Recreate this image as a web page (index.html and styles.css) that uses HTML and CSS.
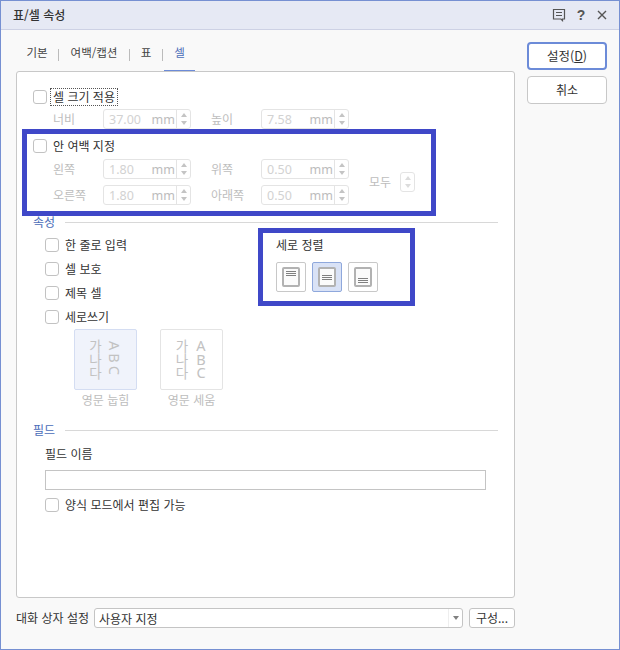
FILE: index.html
```html
<!DOCTYPE html>
<html lang="ko">
<head>
<meta charset="utf-8">
<title>표/셀 속성</title>
<link rel="stylesheet" href="styles.css">
</head>
<body>
<div class="window">
  <header class="titlebar">
    <span class="title">표/셀 속성</span>
    <div class="title-icons">
      <svg class="ti" width="14" height="14" viewBox="0 0 14 14"><path d="M1.5 1.5h11v9.5h-2v1.6l-1.6-1.6h-7.4z" fill="none" stroke="#555" stroke-width="1.2"/><path d="M4 4.5h6M4 7.5h6" stroke="#555" stroke-width="1.2"/></svg>
      <span class="help">?</span>
      <svg class="ti" width="12" height="12" viewBox="0 0 12 12"><path d="M2 2l8 8M10 2l-8 8" stroke="#555" stroke-width="1.4"/></svg>
    </div>
  </header>
  <div class="content">
    <div class="main">
      <nav class="tabs">
        <span class="tab t1">기본</span><i class="sep"></i>
        <span class="tab t2">여백/캡션</span><i class="sep"></i>
        <span class="tab t3">표</span><i class="sep"></i>
        <span class="tab t4 active">셀</span>
      </nav>
      <section class="panel">
        <div class="check-row first"><span class="box"></span><span class="label focus">셀 크기 적용</span></div>
        <div class="field-row size-row">
          <span class="flabel">너비</span>
          <div class="spin"><span class="val">37.00</span><span class="unit">mm</span><span class="arrows"><b class="up"></b><b class="down"></b></span></div>
          <span class="flabel second">높이</span>
          <div class="spin"><span class="val">7.58</span><span class="unit">mm</span><span class="arrows"><b class="up"></b><b class="down"></b></span></div>
        </div>
        <div class="check-row margin-check"><span class="box"></span><span class="label">안 여백 지정</span></div>
        <div class="margins">
          <div class="margin-rows">
            <div class="field-row">
              <span class="flabel">왼쪽</span>
              <div class="spin"><span class="val">1.80</span><span class="unit">mm</span><span class="arrows"><b class="up"></b><b class="down"></b></span></div>
              <span class="flabel second">위쪽</span>
              <div class="spin"><span class="val">0.50</span><span class="unit">mm</span><span class="arrows"><b class="up"></b><b class="down"></b></span></div>
            </div>
            <div class="field-row">
              <span class="flabel">오른쪽</span>
              <div class="spin"><span class="val">1.80</span><span class="unit">mm</span><span class="arrows"><b class="up"></b><b class="down"></b></span></div>
              <span class="flabel second">아래쪽</span>
              <div class="spin"><span class="val">0.50</span><span class="unit">mm</span><span class="arrows"><b class="up"></b><b class="down"></b></span></div>
            </div>
          </div>
          <span class="flabel all">모두</span>
          <span class="all-spin"><b class="up"></b><b class="down"></b></span>
        </div>

        <div class="section-head props"><span>속성</span><i></i></div>
        <div class="props-body">
          <div class="props-left">
            <div class="check-row"><span class="box"></span><span class="label">한 줄로 입력</span></div>
            <div class="check-row"><span class="box"></span><span class="label">셀 보호</span></div>
            <div class="check-row"><span class="box"></span><span class="label">제목 셀</span></div>
            <div class="check-row"><span class="box"></span><span class="label">세로쓰기</span></div>
          </div>
          <div class="valign">
            <span class="label">세로 정렬</span>
            <div class="valign-btns">
              <span class="vbtn"><span class="doc top"><i></i><i></i><i></i></span></span>
              <span class="vbtn on"><span class="doc mid"><i></i><i></i><i></i></span></span>
              <span class="vbtn"><span class="doc bot"><i></i><i></i><i></i></span></span>
            </div>
          </div>
        </div>
        <div class="tiles">
          <div class="tile-col">
            <div class="tile selected"><span class="ko">가 나 다</span><span class="en rot">ABC</span></div>
            <span class="cap">영문 눕힘</span>
          </div>
          <div class="tile-col">
            <div class="tile"><span class="ko">가 나 다</span><span class="en">A B C</span></div>
            <span class="cap">영문 세움</span>
          </div>
        </div>

        <div class="section-head field"><span>필드</span><i></i></div>
        <div class="field-name">필드 이름</div>
        <div class="textbox"></div>
        <div class="check-row form-check"><span class="box"></span><span class="label">양식 모드에서 편집 가능</span></div>
      </section>
      <footer class="footer">
        <span class="label foot-label">대화 상자 설정</span>
        <div class="select"><span class="select-text">사용자 지정</span><span class="select-arrow"><b class="down"></b></span></div>
        <span class="btn-small">구성...</span>
      </footer>
    </div>
    <aside class="side">
      <span class="btn primary">설정(<u>D</u>)</span>
      <span class="btn">취소</span>
    </aside>
  </div>
  <div class="mark mark-a"></div>
  <div class="mark mark-b"></div>
</div>
</body>
</html>
```

FILE: styles.css
```css
* { box-sizing: border-box; }
html, body { margin: 0; padding: 0; background: #f9f9f9; }
body { font-family: "Noto Sans CJK KR", "Noto Sans", sans-serif; font-size: 12px; color: #333; }
i, b { display: block; }

.window { position: relative; width: 620px; height: 650px; border: 1px solid #7690d2; background: #f9f9f9; overflow: hidden; }

.titlebar { height: 29px; background: #e6e9f4; border-bottom: 1px solid #cdd1e4; display: flex; align-items: center; justify-content: space-between; padding: 0 11px 0 12px; }
.title { font-size: 12px; font-weight: 500; color: #333; line-height: 28px; }
.title-icons { display: flex; align-items: center; gap: 10px; }
.ti { display: block; }
.help { font: bold 14px/14px "Liberation Sans", sans-serif; color: #555; width: 10px; text-align: center; }

.content { display: flex; gap: 12px; padding: 0 0 0 15px; }
.main { width: 499px; }
.side { display: flex; flex-direction: column; gap: 6px; padding-top: 12px; }

.tabs { height: 41px; display: flex; align-items: flex-end; }
.tab { height: 32px; line-height: 27px; font-size: 11.5px; color: #444; text-align: center; }
.t1 { width: 42px; }
.t2 { width: 70px; }
.t3 { width: 32px; }
.t4 { width: 31px; margin-left: 1px; }
.tab.active { color: #4a6cb8; border-bottom: 1px solid #6c8bd8; }
.sep { width: 1px; height: 12px; background: #bbb; align-self: flex-end; margin-bottom: 10px; }

.panel { height: 527px; background: #fff; border: 1px solid #c8c8c8; border-radius: 3px; padding: 16px 16px 0 16px; }

.box { display: block; width: 14px; height: 14px; background: #fff; border: 1px solid #c2c2c2; border-radius: 3px; flex: none; }
.check-row { display: flex; align-items: center; gap: 6px; height: 18px; }
.label { font-size: 12px; line-height: 18px; color: #333; white-space: nowrap; }
.focus { outline: 1px dotted #555; outline-offset: -1px; padding: 0 3px; margin-left: -3px; }

.field-row { display: flex; align-items: center; height: 20px; padding-left: 20px; }
.size-row { margin-top: 3px; }
.flabel { font-size: 12px; line-height: 20px; color: #bdbdbd; width: 50px; white-space: nowrap; }
.flabel.second { margin-left: 20px; }
.spin { display: flex; align-items: center; width: 88px; height: 20px; border: 1px solid #e4e4e4; border-radius: 3px; background: #fff; color: #c9c9c9; padding-left: 5px; font-family: "Noto Sans", sans-serif; }
.val { width: 43px; font-size: 12.5px; color: #d2d2d2; }
.unit { width: 25px; font-size: 12.5px; color: #bcbcbc; }
.arrows { width: 14px; height: 18px; border-left: 1px solid #e4e4e4; display: flex; flex-direction: column; align-items: center; justify-content: center; gap: 4px; margin-left: auto; }
.up { width: 0; height: 0; border-left: 3.5px solid transparent; border-right: 3.5px solid transparent; border-bottom: 4px solid #c4c4c4; }
.down { width: 0; height: 0; border-left: 3.5px solid transparent; border-right: 3.5px solid transparent; border-top: 4px solid #c4c4c4; }

.margin-check { margin-top: 8px; }
.margins { display: flex; align-items: center; margin-top: 4px; height: 46px; }
.margin-rows { display: flex; flex-direction: column; gap: 6px; }
.flabel.all { width: auto; margin-left: 20px; }
.all-spin { margin-left: 9px; width: 15px; height: 20px; border: 1px solid #e4e4e4; border-radius: 3px; display: flex; flex-direction: column; align-items: center; justify-content: center; gap: 4px; }
.all-spin b { opacity: .6; }

.section-head { display: flex; align-items: center; height: 16px; color: #4a6cb8; font-size: 12px; line-height: 16px; }
.section-head span { width: 32px; }
.section-head i { flex: 1; height: 1px; background: #d8d8d8; }
.section-head.props { margin-top: 9px; }
.section-head.field { margin-top: 13px; }

.props-body { display: flex; margin-top: 6px; padding-left: 12px; height: 90px; }
.props-left { width: 231px; display: flex; flex-direction: column; gap: 6px; }
.valign { display: flex; flex-direction: column; gap: 8px; }
.valign-btns { display: flex; gap: 6px; }
.vbtn { width: 30px; height: 30px; border: 1px solid #c8c8c8; border-radius: 2px; background: #fff; display: flex; align-items: center; justify-content: center; }
.vbtn.on { background: #d9e2f6; border-color: #8fa8dc; }
.doc { width: 18px; height: 20px; border: 2px solid #b2b2b2; border-radius: 2px; background: #fbfbfb; padding: 2px 1px; display: flex; flex-direction: column; gap: 1px; }
.doc i { height: 1px; margin: 0 1px; background: #808080; }
.doc.mid { justify-content: center; }
.doc.bot { justify-content: flex-end; }

.tiles { display: flex; gap: 23px; margin-top: 3px; padding-left: 41px; }
.tile-col { width: 63px; display: flex; flex-direction: column; align-items: center; }
.tile { width: 63px; height: 61px; border: 1px solid #e4e4e4; border-radius: 2px; display: flex; align-items: center; justify-content: center; gap: 6px; color: #c2c2c2; background: #fff; }
.tile.selected { background: #f0f3fb; border-color: #d4ddf2; }
.ko, .en { display: block; width: 13px; text-align: center; font-size: 13.5px; line-height: 13.5px; }
.en { font-family: "Noto Sans", sans-serif; font-size: 14.5px; font-weight: 400; }
.rot { writing-mode: vertical-rl; width: 14px; letter-spacing: 3px; line-height: 14px; }
.cap { font-size: 12px; line-height: 18px; margin-top: 1px; color: #bdbdbd; white-space: nowrap; }

.field-name { margin-top: 7px; padding-left: 12px; font-size: 12px; line-height: 18px; color: #333; }
.textbox { margin: 7px 12px 0 12px; width: 441px; height: 20px; border: 1px solid #c4c4c4; background: #fff; }
.form-check { margin-top: 6px; padding-left: 12px; }

.footer { display: flex; align-items: center; height: 20px; margin-top: 10px; }
.foot-label { width: 78px; }
.select { display: flex; align-items: center; justify-content: space-between; width: 369px; height: 20px; border: 1px solid #c4c4c4; border-radius: 3px; background: #fff; padding-left: 4px; font-size: 12px; color: #333; }
.select-arrow { width: 14px; height: 18px; border-left: 1px solid #eee; display: flex; align-items: center; justify-content: center; }
.select-arrow .down { border-top-color: #808080; }
.btn-small { width: 46px; height: 20px; margin-left: 6px; border: 1px solid #c4c4c4; border-radius: 3px; background: #fff; text-align: center; font-size: 12px; line-height: 18px; color: #333; }

.btn { display: block; width: 80px; height: 28px; border: 1px solid #c8c8c8; border-radius: 4px; background: #fff; text-align: center; font-size: 12px; line-height: 26px; color: #333; }
.btn.primary { border: 2px solid #6c8bd8; font-size: 12.5px; line-height: 24px; }

.mark { position: absolute; border: 5px solid #3f48c8; pointer-events: none; }
.mark-a { left: 21px; top: 128px; width: 414px; height: 87px; }
.mark-b { left: 257px; top: 227px; width: 157px; height: 78px; }
```
